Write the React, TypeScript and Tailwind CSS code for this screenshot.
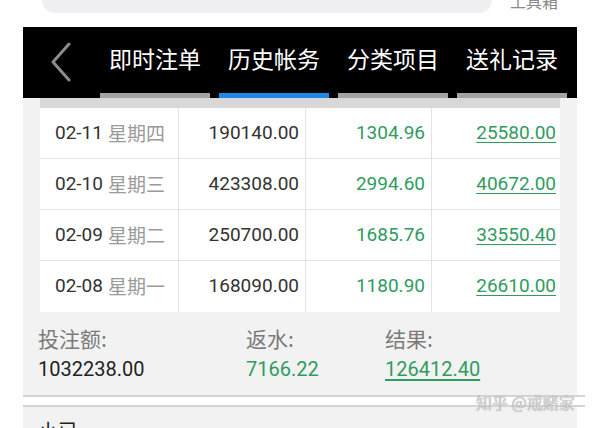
import React from 'react';

const rows = [
    { date: '02-11', day: '星期四', bet: '190140.00', rebate: '1304.96', result: '25580.00' },
    { date: '02-10', day: '星期三', bet: '423308.00', rebate: '2994.60', result: '40672.00' },
    { date: '02-09', day: '星期二', bet: '250700.00', rebate: '1685.76', result: '33550.40' },
    { date: '02-08', day: '星期一', bet: '168090.00', rebate: '1180.90', result: '26610.00' },
];

const tabs = ['即时注单', '历史帐务', '分类项目', '送礼记录'];

const cjk = "font-['Noto_Sans_CJK_SC',sans-serif]";
const num = "font-['Roboto','Noto_Sans_CJK_SC',sans-serif]";

const App: React.FC = () => {
    return (
        <div className={`relative w-[600px] h-[428px] overflow-hidden bg-white ${cjk}`}>
            {/* top search strip */}
            <div className="flex h-[27px]">
                <div className="ml-[42px] w-[450px] h-[13px] bg-[#efeff2] rounded-b-[18px]" />
                <div className="ml-[18px] -mt-[9px] text-[16px] leading-[20px] text-[#8a8a8a]">工具箱</div>
            </div>

            {/* nav bar */}
            <div className="mx-[23px] h-[71px] bg-black flex">
                <div className="w-[77px] pl-[27px] pt-[15px]">
                    <svg width="22" height="40" viewBox="0 0 22 40" fill="none">
                        <path d="M19 2 L3 20 L19 38" stroke="#8c8c8c" strokeWidth="3" strokeLinecap="round" strokeLinejoin="round" />
                    </svg>
                </div>
                <div className="flex gap-[9px]">
                    {tabs.map((t, i) => (
                        <div key={t} className="w-[110px] flex flex-col">
                            <div className="flex-1 flex items-center justify-center pb-[4px] text-white text-[23px] leading-none">{t}</div>
                            <div className={`h-[5px] ${i === 1 ? 'bg-[#1e88e5]' : 'bg-[#a3a3a3]'}`} />
                        </div>
                    ))}
                </div>
            </div>

            {/* gray panel */}
            <div className="mx-[23px] bg-[#f2f2f2]">
                <div className="mx-[17px]">
                    <div className="h-[10px] bg-[#d8d8d8]" />
                    <div className="bg-white">
                        {rows.map((r, i) => (
                            <div
                                key={r.date}
                                className={`flex h-[51px] ${i < rows.length - 1 ? 'border-b border-[#e3e3e3]' : ''}`}
                            >
                                <div className="w-[139px] flex items-center pl-[15px] border-r border-[#e3e3e3] text-[19px]">
                                    <span className={`${num} text-[#333]`}>{r.date}</span>
                                    <span className="ml-[5px] text-[#9a9a9a] text-[19px]">{r.day}</span>
                                </div>
                                <div className={`w-[127px] flex items-center justify-end pr-[6px] border-r border-[#e3e3e3] ${num} text-[19px] text-[#333]`}>
                                    {r.bet}
                                </div>
                                <div className={`w-[126px] flex items-center justify-end pr-[6px] border-r border-[#e3e3e3] ${num} text-[19px] text-[#2f9c5f]`}>
                                    {r.rebate}
                                </div>
                                <div className={`flex-1 flex items-center justify-end pr-[4px] ${num} text-[19px] text-[#2f9c5f] underline underline-offset-[3px]`}>
                                    {r.result}
                                </div>
                            </div>
                        ))}
                    </div>
                </div>

                {/* totals */}
                <div className="flex h-[83px] pt-[14px] pl-[15px]">
                    <div className="w-[208px]">
                        <div className="text-[21px] leading-[24px] text-[#7a7a7a]">投注额:</div>
                        <div className={`${num} mt-[7px] text-[20px] leading-[24px] text-[#222]`}>1032238.00</div>
                    </div>
                    <div className="w-[139px]">
                        <div className="text-[21px] leading-[24px] text-[#7a7a7a]">返水:</div>
                        <div className={`${num} mt-[7px] text-[20px] leading-[24px] text-[#2f9c5f]`}>7166.22</div>
                    </div>
                    <div>
                        <div className="text-[21px] leading-[24px] text-[#7a7a7a]">结果:</div>
                        <div className={`${num} mt-[7px] text-[20px] leading-[24px] text-[#2f9c5f] underline underline-offset-[3px]`}>126412.40</div>
                    </div>
                </div>
            </div>

            {/* separator */}
            <div className="ml-[23px] mr-[15px] h-[12px] bg-white border-t-2 border-b-2 border-[#d4d4d4]" />

            <div className="mx-[23px] h-[40px] bg-[#f2f2f2] pl-[15px] pt-[12px] text-[20px] leading-[24px] text-[#222]">
                小已
            </div>

            {/* watermark */}
            <div className="absolute left-[476px] top-[392px] text-[16px] leading-[20px] text-[#d6d6d6] [text-shadow:0_0_1px_#888]">
                知乎 @戒赌家
            </div>
        </div>
    );
};

export default App;
